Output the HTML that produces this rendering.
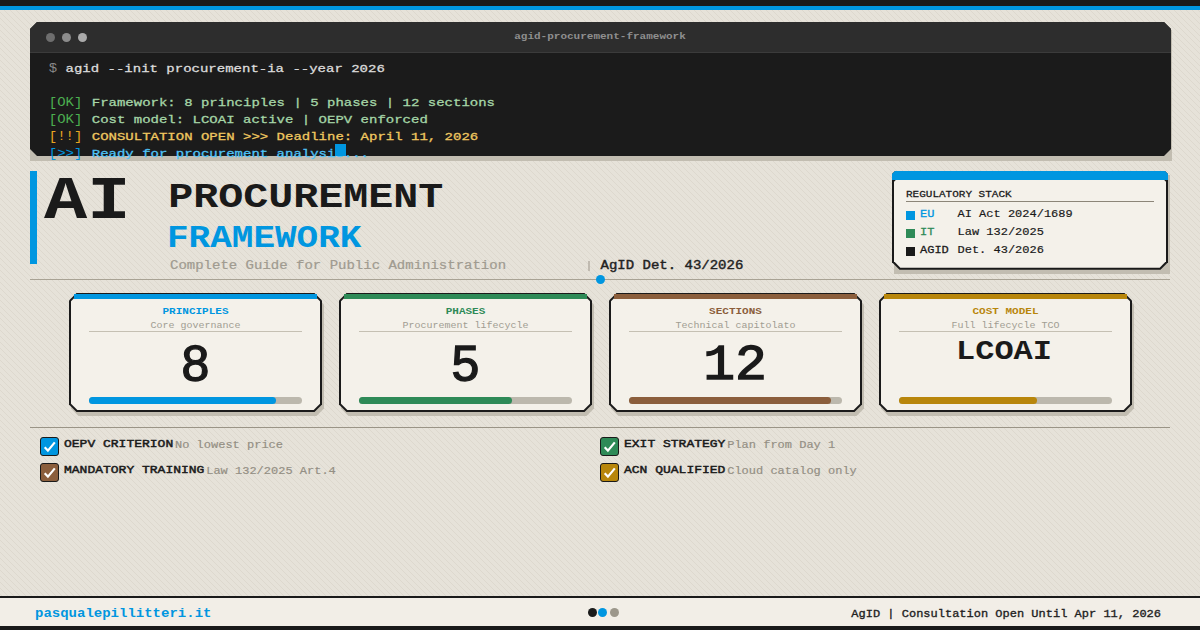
<!DOCTYPE html>
<html><head><meta charset="utf-8"><style>
html,body{margin:0;padding:0}
body{width:1200px;height:630px;position:relative;overflow:hidden;
background-color:#e6e2d9;
font-family:"Liberation Mono",monospace}
.t{position:absolute;white-space:pre;line-height:1}
</style></head><body>
<svg style="position:absolute;left:0;top:0" width="1200" height="630"><defs><pattern id="st" x="0" y="0" width="6" height="6" patternUnits="userSpaceOnUse"><path d="M-3,-3 L9,9 M-9,-3 L3,9 M3,-3 L15,9" stroke="rgba(80,70,50,0.07)" stroke-width="0.9" fill="none"/></pattern></defs><rect width="1200" height="630" fill="url(#st)"/></svg>
<div style="position:absolute;left:0px;top:0px;width:1200px;height:5.5px;background:#1a1a1a;"></div>
<div style="position:absolute;left:0px;top:5.5px;width:1200px;height:4.5px;background:#0096e0;"></div>
<div style="position:absolute;left:30px;top:30px;width:1142px;height:130.5px;background:#c2bdb1;"></div>
<div style="position:absolute;left:30px;top:22px;width:1141px;height:134px;background:#1b1b1b;clip-path:polygon(7.00px 0.00px,1134.00px 0.00px,1141.00px 7.00px,1141.00px 127.00px,1134.00px 134.00px,7.00px 134.00px,0.00px 127.00px,0.00px 7.00px);"><div style="position:absolute;left:0;top:0;width:100%;height:30px;background:#2d2d2d;border-bottom:1px solid #3b3b3b"></div></div>
<div style="position:absolute;left:45.95px;top:32.9px;width:9px;height:9px;background:#6e6e6e;border-radius:50%"></div>
<div style="position:absolute;left:61.95px;top:32.9px;width:9px;height:9px;background:#8c8c8c;border-radius:50%"></div>
<div style="position:absolute;left:77.95px;top:32.9px;width:9px;height:9px;background:#aaaaaa;border-radius:50%"></div>
<div class="t" style="left:600px;width:0;display:flex;justify-content:center;top:31.07px;font-size:11px;color:#8f8f8f;font-weight:bold;letter-spacing:0px;font-family:'Liberation Mono',monospace;transform:scaleY(0.86);transform-origin:0 8.43px;">agid-procurement-framework</div>
<div class="t" style="left:48.75px;top:60.77px;font-size:14px;color:#8a8a8a;font-weight:normal;letter-spacing:0px;font-family:'Liberation Mono',monospace;transform:scaleY(0.86);transform-origin:0 10.73px;">$</div>
<div class="t" style="left:65.55px;top:60.77px;font-size:14px;color:#dcdcdc;font-weight:normal;letter-spacing:0px;font-family:'Liberation Mono',monospace;transform:scaleY(0.8);transform-origin:0 10.73px;-webkit-text-stroke:0.35px #dcdcdc;">agid --init procurement-ia --year 2026</div>
<div class="t" style="left:48.75px;top:95.37px;font-size:14px;color:#4caf50;font-weight:normal;letter-spacing:0px;font-family:'Liberation Mono',monospace;transform:scaleY(0.88);transform-origin:0 10.73px;">[OK]</div>
<div class="t" style="left:91.75px;top:95.37px;font-size:14px;color:#a5d6a7;font-weight:normal;letter-spacing:0px;font-family:'Liberation Mono',monospace;transform:scaleY(0.8);transform-origin:0 10.73px;-webkit-text-stroke:0.35px #a5d6a7;">Framework: 8 principles | 5 phases | 12 sections</div>
<div class="t" style="left:48.75px;top:112.37px;font-size:14px;color:#4caf50;font-weight:normal;letter-spacing:0px;font-family:'Liberation Mono',monospace;transform:scaleY(0.88);transform-origin:0 10.73px;">[OK]</div>
<div class="t" style="left:91.75px;top:112.37px;font-size:14px;color:#a5d6a7;font-weight:normal;letter-spacing:0px;font-family:'Liberation Mono',monospace;transform:scaleY(0.8);transform-origin:0 10.73px;-webkit-text-stroke:0.35px #a5d6a7;">Cost model: LCOAI active | OEPV enforced</div>
<div class="t" style="left:48.75px;top:129.37px;font-size:14px;color:#e8a520;font-weight:normal;letter-spacing:0px;font-family:'Liberation Mono',monospace;transform:scaleY(0.88);transform-origin:0 10.73px;">[!!]</div>
<div class="t" style="left:91.75px;top:129.37px;font-size:14px;color:#f0c860;font-weight:normal;letter-spacing:0px;font-family:'Liberation Mono',monospace;transform:scaleY(0.8);transform-origin:0 10.73px;-webkit-text-stroke:0.35px #f0c860;">CONSULTATION OPEN &gt;&gt;&gt; Deadline: April 11, 2026</div>
<div class="t" style="left:48.75px;top:146.37px;font-size:14px;color:#0096e0;font-weight:normal;letter-spacing:0px;font-family:'Liberation Mono',monospace;transform:scaleY(0.88);transform-origin:0 10.73px;">[&gt;&gt;]</div>
<div class="t" style="left:91.75px;top:146.37px;font-size:14px;color:#4fc3f7;font-weight:normal;letter-spacing:0px;font-family:'Liberation Mono',monospace;transform:scaleY(0.8);transform-origin:0 10.73px;-webkit-text-stroke:0.35px #4fc3f7;">Ready for procurement analysis...</div>
<div style="position:absolute;left:335px;top:144px;width:11px;height:12px;background:#0096e0;"></div>
<div style="position:absolute;left:30px;top:171px;width:7px;height:93px;background:#0096e0;"></div>
<div class="t" style="left:44px;top:163.44px;font-size:72px;color:#1a1a1a;font-weight:bold;letter-spacing:0px;font-family:'Liberation Mono',monospace;transform:scaleY(0.86);transform-origin:0 55.16px;">AI</div>
<div class="t" style="left:168.2px;top:175.75px;font-size:41.7px;color:#1a1a1a;font-weight:bold;letter-spacing:0px;font-family:'Liberation Mono',monospace;transform:scaleY(0.86);transform-origin:0 31.95px;">PROCUREMENT</div>
<div class="t" style="left:167px;top:219.72px;font-size:36px;color:#0096e0;font-weight:bold;letter-spacing:0px;font-family:'Liberation Mono',monospace;transform:scaleY(0.86);transform-origin:0 27.58px;">FRAMEWORK</div>
<div class="t" style="left:170px;top:257.97px;font-size:14px;color:#a09b90;font-weight:normal;letter-spacing:0px;font-family:'Liberation Mono',monospace;transform:scaleY(0.86);transform-origin:0 10.73px;-webkit-text-stroke:0.25px #a09b90;">Complete Guide for Public Administration</div>
<div style="position:absolute;left:588.4px;top:260.5px;width:1.5px;height:10.5px;background:#c0bab0;"></div>
<div class="t" style="left:600.5px;top:258.02px;font-size:14px;color:#222;font-weight:normal;letter-spacing:0px;font-family:'Liberation Mono',monospace;transform:scaleY(0.86);transform-origin:0 10.73px;-webkit-text-stroke:0.45px #222;">AgID Det. 43/2026</div>
<div style="position:absolute;left:30px;top:278.5px;width:1140px;height:1.5px;background:#a8a294;"></div>
<div style="position:absolute;left:596px;top:274.75px;width:9px;height:9px;background:#0096e0;border-radius:50%"></div>
<div style="position:absolute;left:894px;top:175px;width:276px;height:98.8px;background:#c2bdb1;"></div>
<div style="position:absolute;left:892px;top:171px;width:276px;height:98.7px;background:#1a1a1a;clip-path:polygon(3.00px 0.00px,273.00px 0.00px,276.00px 3.00px,276.00px 91.20px,268.50px 98.70px,7.50px 98.70px,0.00px 91.20px,0.00px 3.00px);"><div style="position:absolute;left:2px;top:9px;width:272px;height:87.7px;background:#f4f1ea;clip-path:polygon(1.83px 0.00px,270.17px 0.00px,272.00px 1.83px,272.00px 81.37px,265.67px 87.70px,6.33px 87.70px,0.00px 81.37px,0.00px 1.83px);"></div></div>
<div style="position:absolute;left:892px;top:171px;width:276px;height:9px;background:#0096e0;clip-path:polygon(3.00px 0.00px,273.00px 0.00px,276.00px 3.00px,276.00px 9.00px,276.00px 9.00px,0.00px 9.00px,0.00px 9.00px,0.00px 3.00px);"></div>
<div class="t" style="left:906px;top:188.57px;font-size:11px;color:#1a1a1a;font-weight:normal;letter-spacing:0px;font-family:'Liberation Mono',monospace;transform:scaleY(0.86);transform-origin:0 8.43px;-webkit-text-stroke:0.3px #1a1a1a;">REGULATORY STACK</div>
<div style="position:absolute;left:906px;top:200.5px;width:248px;height:1.5px;background:#8c8679;"></div>
<div style="position:absolute;left:906px;top:211.25px;width:9px;height:9px;background:#0096e0;"></div>
<div class="t" style="left:920px;top:208.06px;font-size:12px;color:#0096e0;font-weight:normal;letter-spacing:0px;font-family:'Liberation Mono',monospace;transform:scaleY(0.86);transform-origin:0 9.19px;-webkit-text-stroke:0.3px #0096e0;">EU</div>
<div class="t" style="left:957.5px;top:208.06px;font-size:12px;color:#1a1a1a;font-weight:normal;letter-spacing:0px;font-family:'Liberation Mono',monospace;transform:scaleY(0.86);transform-origin:0 9.19px;-webkit-text-stroke:0.2px #1a1a1a;">AI Act 2024/1689</div>
<div style="position:absolute;left:906px;top:229.05px;width:9px;height:9px;background:#2e8a57;"></div>
<div class="t" style="left:920px;top:225.86px;font-size:12px;color:#2e8a57;font-weight:normal;letter-spacing:0px;font-family:'Liberation Mono',monospace;transform:scaleY(0.86);transform-origin:0 9.19px;-webkit-text-stroke:0.3px #2e8a57;">IT</div>
<div class="t" style="left:957.5px;top:225.86px;font-size:12px;color:#1a1a1a;font-weight:normal;letter-spacing:0px;font-family:'Liberation Mono',monospace;transform:scaleY(0.86);transform-origin:0 9.19px;-webkit-text-stroke:0.2px #1a1a1a;">Law 132/2025</div>
<div style="position:absolute;left:906px;top:246.85px;width:9px;height:9px;background:#1a1a1a;"></div>
<div class="t" style="left:920px;top:243.66px;font-size:12px;color:#1a1a1a;font-weight:normal;letter-spacing:0px;font-family:'Liberation Mono',monospace;transform:scaleY(0.86);transform-origin:0 9.19px;-webkit-text-stroke:0.3px #1a1a1a;">AGID</div>
<div class="t" style="left:957.5px;top:243.66px;font-size:12px;color:#1a1a1a;font-weight:normal;letter-spacing:0px;font-family:'Liberation Mono',monospace;transform:scaleY(0.86);transform-origin:0 9.19px;-webkit-text-stroke:0.2px #1a1a1a;">Det. 43/2026</div>
<div style="position:absolute;left:71px;top:297px;width:253px;height:119px;background:#c2bdb1;clip-path:polygon(7.50px 0.00px,245.50px 0.00px,253.00px 7.50px,253.00px 111.50px,245.50px 119.00px,7.50px 119.00px,0.00px 111.50px,0.00px 7.50px);"></div>
<div style="position:absolute;left:69px;top:293px;width:253px;height:119px;background:#1a1a1a;clip-path:polygon(7.50px 0.00px,245.50px 0.00px,253.00px 7.50px,253.00px 111.50px,245.50px 119.00px,7.50px 119.00px,0.00px 111.50px,0.00px 7.50px);"><div style="position:absolute;left:2px;top:2px;width:249px;height:115px;background:#f4f1ea;clip-path:polygon(6.33px 0.00px,242.67px 0.00px,249.00px 6.33px,249.00px 108.67px,242.67px 115.00px,6.33px 115.00px,0.00px 108.67px,0.00px 6.33px);"></div></div>
<div style="position:absolute;left:74px;top:294px;width:243px;height:5px;background:#0096e0;"></div>
<div class="t" style="left:195.5px;width:0;display:flex;justify-content:center;top:306.47px;font-size:11px;color:#0096e0;font-weight:bold;letter-spacing:0px;font-family:'Liberation Mono',monospace;transform:scaleY(0.86);transform-origin:0 8.43px;">PRINCIPLES</div>
<div class="t" style="left:195.5px;width:0;display:flex;justify-content:center;top:320.84px;font-size:10px;color:#a19d92;font-weight:normal;letter-spacing:0px;font-family:'Liberation Mono',monospace;transform:scaleY(0.86);transform-origin:0 7.66px;">Core governance</div>
<div style="position:absolute;left:89px;top:331px;width:213px;height:1px;background:#c5c0b3;"></div>
<div class="t" style="left:195.5px;width:0;display:flex;justify-content:center;top:338.88px;font-size:50px;color:#1a1a1a;font-weight:normal;letter-spacing:0px;font-family:'Liberation Sans',sans-serif;-webkit-text-stroke:1.3px #1a1a1a;">8</div>
<div style="position:absolute;left:89px;top:397px;width:213px;height:7px;background:#bcb8ad;border-radius:4px"></div>
<div style="position:absolute;left:89px;top:397px;width:187px;height:7px;background:#0096e0;border-radius:4px"></div>
<div style="position:absolute;left:341px;top:297px;width:253px;height:119px;background:#c2bdb1;clip-path:polygon(7.50px 0.00px,245.50px 0.00px,253.00px 7.50px,253.00px 111.50px,245.50px 119.00px,7.50px 119.00px,0.00px 111.50px,0.00px 7.50px);"></div>
<div style="position:absolute;left:339px;top:293px;width:253px;height:119px;background:#1a1a1a;clip-path:polygon(7.50px 0.00px,245.50px 0.00px,253.00px 7.50px,253.00px 111.50px,245.50px 119.00px,7.50px 119.00px,0.00px 111.50px,0.00px 7.50px);"><div style="position:absolute;left:2px;top:2px;width:249px;height:115px;background:#f4f1ea;clip-path:polygon(6.33px 0.00px,242.67px 0.00px,249.00px 6.33px,249.00px 108.67px,242.67px 115.00px,6.33px 115.00px,0.00px 108.67px,0.00px 6.33px);"></div></div>
<div style="position:absolute;left:344px;top:294px;width:243px;height:5px;background:#2e8a57;"></div>
<div class="t" style="left:465.5px;width:0;display:flex;justify-content:center;top:306.47px;font-size:11px;color:#2e8a57;font-weight:bold;letter-spacing:0px;font-family:'Liberation Mono',monospace;transform:scaleY(0.86);transform-origin:0 8.43px;">PHASES</div>
<div class="t" style="left:465.5px;width:0;display:flex;justify-content:center;top:320.84px;font-size:10px;color:#a19d92;font-weight:normal;letter-spacing:0px;font-family:'Liberation Mono',monospace;transform:scaleY(0.86);transform-origin:0 7.66px;">Procurement lifecycle</div>
<div style="position:absolute;left:359px;top:331px;width:213px;height:1px;background:#c5c0b3;"></div>
<div class="t" style="left:465.5px;width:0;display:flex;justify-content:center;top:338.88px;font-size:50px;color:#1a1a1a;font-weight:normal;letter-spacing:0px;font-family:'Liberation Sans',sans-serif;-webkit-text-stroke:1.3px #1a1a1a;">5</div>
<div style="position:absolute;left:359px;top:397px;width:213px;height:7px;background:#bcb8ad;border-radius:4px"></div>
<div style="position:absolute;left:359px;top:397px;width:153px;height:7px;background:#2e8a57;border-radius:4px"></div>
<div style="position:absolute;left:611px;top:297px;width:253px;height:119px;background:#c2bdb1;clip-path:polygon(7.50px 0.00px,245.50px 0.00px,253.00px 7.50px,253.00px 111.50px,245.50px 119.00px,7.50px 119.00px,0.00px 111.50px,0.00px 7.50px);"></div>
<div style="position:absolute;left:609px;top:293px;width:253px;height:119px;background:#1a1a1a;clip-path:polygon(7.50px 0.00px,245.50px 0.00px,253.00px 7.50px,253.00px 111.50px,245.50px 119.00px,7.50px 119.00px,0.00px 111.50px,0.00px 7.50px);"><div style="position:absolute;left:2px;top:2px;width:249px;height:115px;background:#f4f1ea;clip-path:polygon(6.33px 0.00px,242.67px 0.00px,249.00px 6.33px,249.00px 108.67px,242.67px 115.00px,6.33px 115.00px,0.00px 108.67px,0.00px 6.33px);"></div></div>
<div style="position:absolute;left:614px;top:294px;width:243px;height:5px;background:#8b5e3c;"></div>
<div class="t" style="left:735.5px;width:0;display:flex;justify-content:center;top:306.47px;font-size:11px;color:#8b5e3c;font-weight:bold;letter-spacing:0px;font-family:'Liberation Mono',monospace;transform:scaleY(0.86);transform-origin:0 8.43px;">SECTIONS</div>
<div class="t" style="left:735.5px;width:0;display:flex;justify-content:center;top:320.84px;font-size:10px;color:#a19d92;font-weight:normal;letter-spacing:0px;font-family:'Liberation Mono',monospace;transform:scaleY(0.86);transform-origin:0 7.66px;">Technical capitolato</div>
<div style="position:absolute;left:629px;top:331px;width:213px;height:1px;background:#c5c0b3;"></div>
<div class="t" style="left:735.0px;width:0;display:flex;justify-content:center;top:339.00px;font-size:53px;color:#1a1a1a;font-weight:normal;letter-spacing:0px;font-family:'Liberation Mono',monospace;transform:scaleY(0.95);transform-origin:0 40.60px;-webkit-text-stroke:1.5px #1a1a1a;">12</div>
<div style="position:absolute;left:629px;top:397px;width:213px;height:7px;background:#bcb8ad;border-radius:4px"></div>
<div style="position:absolute;left:629px;top:397px;width:202px;height:7px;background:#8b5e3c;border-radius:4px"></div>
<div style="position:absolute;left:881px;top:297px;width:253px;height:119px;background:#c2bdb1;clip-path:polygon(7.50px 0.00px,245.50px 0.00px,253.00px 7.50px,253.00px 111.50px,245.50px 119.00px,7.50px 119.00px,0.00px 111.50px,0.00px 7.50px);"></div>
<div style="position:absolute;left:879px;top:293px;width:253px;height:119px;background:#1a1a1a;clip-path:polygon(7.50px 0.00px,245.50px 0.00px,253.00px 7.50px,253.00px 111.50px,245.50px 119.00px,7.50px 119.00px,0.00px 111.50px,0.00px 7.50px);"><div style="position:absolute;left:2px;top:2px;width:249px;height:115px;background:#f4f1ea;clip-path:polygon(6.33px 0.00px,242.67px 0.00px,249.00px 6.33px,249.00px 108.67px,242.67px 115.00px,6.33px 115.00px,0.00px 108.67px,0.00px 6.33px);"></div></div>
<div style="position:absolute;left:884px;top:294px;width:243px;height:5px;background:#b8860b;"></div>
<div class="t" style="left:1005.5px;width:0;display:flex;justify-content:center;top:306.47px;font-size:11px;color:#b8860b;font-weight:bold;letter-spacing:0px;font-family:'Liberation Mono',monospace;transform:scaleY(0.86);transform-origin:0 8.43px;">COST MODEL</div>
<div class="t" style="left:1005.5px;width:0;display:flex;justify-content:center;top:320.84px;font-size:10px;color:#a19d92;font-weight:normal;letter-spacing:0px;font-family:'Liberation Mono',monospace;transform:scaleY(0.86);transform-origin:0 7.66px;">Full lifecycle TCO</div>
<div style="position:absolute;left:899px;top:331px;width:213px;height:1px;background:#c5c0b3;"></div>
<div class="t" style="left:1004.0px;width:0;display:flex;justify-content:center;top:335.28px;font-size:32px;color:#1a1a1a;font-weight:bold;letter-spacing:0px;font-family:'Liberation Mono',monospace;transform:scaleY(0.86);transform-origin:0 24.52px;">LCOAI</div>
<div style="position:absolute;left:899px;top:397px;width:213px;height:7px;background:#bcb8ad;border-radius:4px"></div>
<div style="position:absolute;left:899px;top:397px;width:138px;height:7px;background:#b8860b;border-radius:4px"></div>
<div style="position:absolute;left:30px;top:427px;width:1140px;height:1.2px;background:#9a9486;"></div>
<div style="position:absolute;left:40px;top:437px;width:17px;height:17px;background:#0096e0;border:1px solid #1a1a1a;border-radius:3px"></div>
<div style="position:absolute;left:40.5px;top:437.5px;width:18px;height:18px"><svg width="18" height="18" viewBox="0 0 18 18" style="position:absolute;left:0;top:0"><path d="M3.7 9.3 L6.9 12.6 L13.8 4.4" fill="none" stroke="#fff" stroke-width="2.2"/></svg></div>
<div class="t" style="left:64px;top:436.84px;font-size:13px;color:#1a1a1a;font-weight:normal;letter-spacing:0px;font-family:'Liberation Mono',monospace;transform:scaleY(0.86);transform-origin:0 9.96px;-webkit-text-stroke:0.55px #1a1a1a;">OEPV CRITERION</div>
<div class="t" style="left:175.0px;top:438.61px;font-size:12px;color:#948f84;font-weight:normal;letter-spacing:0px;font-family:'Liberation Mono',monospace;transform:scaleY(0.86);transform-origin:0 9.19px;-webkit-text-stroke:0.2px #948f84;">No lowest price</div>
<div style="position:absolute;left:40px;top:463px;width:17px;height:17px;background:#8b5e3c;border:1px solid #1a1a1a;border-radius:3px"></div>
<div style="position:absolute;left:40.5px;top:463.5px;width:18px;height:18px"><svg width="18" height="18" viewBox="0 0 18 18" style="position:absolute;left:0;top:0"><path d="M3.7 9.3 L6.9 12.6 L13.8 4.4" fill="none" stroke="#fff" stroke-width="2.2"/></svg></div>
<div class="t" style="left:64px;top:462.84px;font-size:13px;color:#1a1a1a;font-weight:normal;letter-spacing:0px;font-family:'Liberation Mono',monospace;transform:scaleY(0.86);transform-origin:0 9.96px;-webkit-text-stroke:0.55px #1a1a1a;">MANDATORY TRAINING</div>
<div class="t" style="left:206.20000000000002px;top:464.61px;font-size:12px;color:#948f84;font-weight:normal;letter-spacing:0px;font-family:'Liberation Mono',monospace;transform:scaleY(0.86);transform-origin:0 9.19px;-webkit-text-stroke:0.2px #948f84;">Law 132/2025 Art.4</div>
<div style="position:absolute;left:600px;top:437px;width:17px;height:17px;background:#2e8a57;border:1px solid #1a1a1a;border-radius:3px"></div>
<div style="position:absolute;left:600.5px;top:437.5px;width:18px;height:18px"><svg width="18" height="18" viewBox="0 0 18 18" style="position:absolute;left:0;top:0"><path d="M3.7 9.3 L6.9 12.6 L13.8 4.4" fill="none" stroke="#fff" stroke-width="2.2"/></svg></div>
<div class="t" style="left:624px;top:436.84px;font-size:13px;color:#1a1a1a;font-weight:normal;letter-spacing:0px;font-family:'Liberation Mono',monospace;transform:scaleY(0.86);transform-origin:0 9.96px;-webkit-text-stroke:0.55px #1a1a1a;">EXIT STRATEGY</div>
<div class="t" style="left:727.1999999999999px;top:438.61px;font-size:12px;color:#948f84;font-weight:normal;letter-spacing:0px;font-family:'Liberation Mono',monospace;transform:scaleY(0.86);transform-origin:0 9.19px;-webkit-text-stroke:0.2px #948f84;">Plan from Day 1</div>
<div style="position:absolute;left:600px;top:463px;width:17px;height:17px;background:#b8860b;border:1px solid #1a1a1a;border-radius:3px"></div>
<div style="position:absolute;left:600.5px;top:463.5px;width:18px;height:18px"><svg width="18" height="18" viewBox="0 0 18 18" style="position:absolute;left:0;top:0"><path d="M3.7 9.3 L6.9 12.6 L13.8 4.4" fill="none" stroke="#fff" stroke-width="2.2"/></svg></div>
<div class="t" style="left:624px;top:462.84px;font-size:13px;color:#1a1a1a;font-weight:normal;letter-spacing:0px;font-family:'Liberation Mono',monospace;transform:scaleY(0.86);transform-origin:0 9.96px;-webkit-text-stroke:0.55px #1a1a1a;">ACN QUALIFIED</div>
<div class="t" style="left:727.1999999999999px;top:464.61px;font-size:12px;color:#948f84;font-weight:normal;letter-spacing:0px;font-family:'Liberation Mono',monospace;transform:scaleY(0.86);transform-origin:0 9.19px;-webkit-text-stroke:0.2px #948f84;">Cloud catalog only</div>
<div style="position:absolute;left:0px;top:596px;width:1200px;height:2px;background:#1a1a1a;"></div>
<div style="position:absolute;left:0px;top:598px;width:1200px;height:28px;background:#f2eee7;"></div>
<div style="position:absolute;left:0px;top:626px;width:1200px;height:4px;background:#1a1a1a;"></div>
<div class="t" style="left:35px;top:606.37px;font-size:14px;color:#0096e0;font-weight:bold;letter-spacing:0px;font-family:'Liberation Mono',monospace;transform:scaleY(0.86);transform-origin:0 10.73px;">pasqualepillitteri.it</div>
<div style="position:absolute;left:588px;top:607.9px;width:9px;height:9px;background:#1a1a1a;border-radius:50%"></div>
<div style="position:absolute;left:598px;top:607.9px;width:9px;height:9px;background:#0096e0;border-radius:50%"></div>
<div style="position:absolute;left:610px;top:607.9px;width:9px;height:9px;background:#9c978b;border-radius:50%"></div>
<div class="t" style="right:39px;top:607.81px;font-size:12px;color:#222;font-weight:normal;letter-spacing:0px;font-family:'Liberation Mono',monospace;transform:scaleY(0.95);transform-origin:100% 9.19px;-webkit-text-stroke:0.35px #222;">AgID | Consultation Open Until Apr 11, 2026</div>
</body></html>
